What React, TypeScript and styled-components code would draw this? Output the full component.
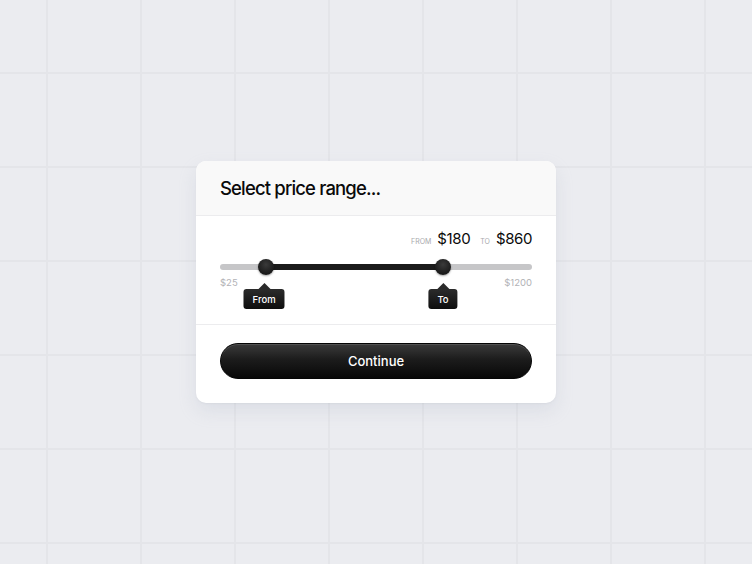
import React from "react";
import styled, { createGlobalStyle } from "styled-components";

const GlobalStyle = createGlobalStyle`
  html, body { margin: 0; padding: 0; }
  body {
    font-family: Inter, "Noto Sans", "Liberation Sans", sans-serif;
    -webkit-font-smoothing: antialiased;
  }
`;

const Page = styled.div`
  width: 100vw;
  height: 100vh;
  display: flex;
  align-items: center;
  justify-content: center;
  background-color: #ebecf0;
  background-image:
    linear-gradient(to right, #e4e5e9 0, #e4e5e9 2px, transparent 2px),
    linear-gradient(to bottom, #e4e5e9 0, #e4e5e9 2px, transparent 2px);
  background-size: 94px 94px;
  background-position: 46px 72px;
`;

const Card = styled.div`
  width: 360px;
  background: #ffffff;
  border-radius: 10px;
  overflow: hidden;
  box-shadow: 0 8px 18px rgba(160, 168, 190, 0.2), 0 1px 2px rgba(0, 0, 0, 0.04);
`;

const Header = styled.div`
  height: 54px;
  display: flex;
  align-items: center;
  padding: 0 24px;
  background: #f9f9f9;
  border-bottom: 1px solid #ececee;
`;

const Title = styled.h1`
  margin: 0;
  font-size: 18.5px;
  font-weight: 500;
  color: #0a0a0a;
  letter-spacing: -0.85px;
`;

const Body = styled.div`
  padding: 13px 24px 35px;
  border-bottom: 1px solid #ececee;
  display: flex;
  flex-direction: column;
`;

const PriceRow = styled.div`
  display: flex;
  justify-content: flex-end;
  align-items: baseline;
  gap: 10px;
  height: 20px;
  margin-bottom: 10px;
`;

const PriceGroup = styled.div`
  display: flex;
  align-items: baseline;
  gap: 6px;
`;

const PriceLabel = styled.span`
  font-size: 7px;
  text-transform: uppercase;
  letter-spacing: 0;
  color: #a8a8ac;
`;

const PriceValue = styled.span`
  font-size: 15px;
  color: #0a0a0a;
  font-weight: 400;
  letter-spacing: -0.4px;
`;

const SliderArea = styled.div`
  position: relative;
  height: 16px;
  display: flex;
  align-items: center;
`;

const Track = styled.div`
  width: 100%;
  height: 6px;
  border-radius: 3px;
  background: #c6c6c8;
`;

const Range = styled.div`
  position: absolute;
  top: 5px;
  height: 6px;
  background: #1b1b1b;
`;

const Thumb = styled.div`
  position: absolute;
  top: 0;
  width: 16px;
  height: 16px;
  margin-left: -8px;
  border-radius: 50%;
  background: radial-gradient(circle at 50% 35%, #3a3a3a 0%, #1a1a1a 70%);
  box-shadow: 0 1px 2px rgba(0, 0, 0, 0.35);
`;

const Tooltip = styled.div`
  position: absolute;
  top: 30px;
  transform: translateX(-50%);
  height: 20px;
  padding: 0 9px;
  border-radius: 3px;
  background: linear-gradient(#2c2c2c, #0e0e0e);
  color: #fff;
  font-size: 9.5px;
  font-weight: 500;
  display: flex;
  align-items: center;
  white-space: nowrap;
  &::before {
    content: "";
    position: absolute;
    left: 50%;
    top: -6px;
    margin-left: -6px;
    border-left: 6px solid transparent;
    border-right: 6px solid transparent;
    border-bottom: 6px solid #2a2a2a;
  }
`;

const LimitRow = styled.div`
  display: flex;
  justify-content: space-between;
  margin-top: 2px;
  font-size: 9.5px;
  line-height: 12px;
  color: #b2b2b6;
`;

const Footer = styled.div`
  padding: 18px 24px 24px;
`;

const Button = styled.button`
  width: 100%;
  height: 36px;
  border-radius: 18px;
  border: 1px solid #050505;
  background: linear-gradient(#3b3b3b 0%, #1c1c1c 45%, #080808 100%);
  box-shadow: inset 0 1px 0 rgba(255, 255, 255, 0.12);
  color: #fff;
  font-family: inherit;
  font-size: 13px;
  font-weight: 500;
  cursor: pointer;
`;

const MIN = 25;
const MAX = 1200;
const from = 180;
const to = 860;

export default function App() {
  const a = 14.74;
  const b = 71.47;
  return (
    <Page>
      <GlobalStyle />
      <Card>
        <Header>
          <Title>Select price range...</Title>
        </Header>
        <Body>
          <PriceRow>
            <PriceGroup>
              <PriceLabel>From</PriceLabel>
              <PriceValue>${from}</PriceValue>
            </PriceGroup>
            <PriceGroup>
              <PriceLabel>To</PriceLabel>
              <PriceValue>${to}</PriceValue>
            </PriceGroup>
          </PriceRow>
          <SliderArea>
            <Track />
            <Range style={{ left: `${a}%`, width: `${b - a}%` }} />
            <Thumb style={{ left: `${a}%` }} />
            <Thumb style={{ left: `${b}%` }} />
            <Tooltip style={{ left: `${a - 0.6}%` }}>From</Tooltip>
            <Tooltip style={{ left: `${b}%` }}>To</Tooltip>
          </SliderArea>
          <LimitRow>
            <span>${MIN}</span>
            <span>${MAX}</span>
          </LimitRow>
        </Body>
        <Footer>
          <Button>Continue</Button>
        </Footer>
      </Card>
    </Page>
  );
}
